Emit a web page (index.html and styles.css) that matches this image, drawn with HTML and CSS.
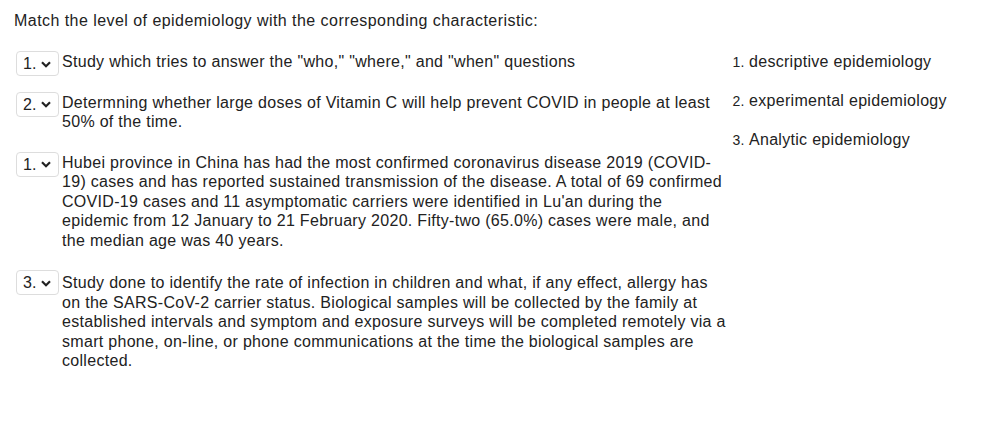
FILE: index.html
```html
<!DOCTYPE html>
<html lang="en">
  <head>
    <meta charset="UTF-8" />
    <title>Matching question</title>
    <link rel="stylesheet" href="styles.css">
  </head>
  <body>
    <div class="question">
      <p class="prompt">Match the level of epidemiology with the corresponding characteristic:</p>
      <div class="match">
        <div class="stems">
          <div class="stem">
            <span class="pick">1. <svg viewBox="0 0 10 7" class="chev"><path d="M1 1.2l4 4 4-4"/></svg></span>
            <p class="stem-text">Study which tries to answer the "who," "where," and "when" questions</p>
          </div>
          <div class="stem">
            <span class="pick">2. <svg viewBox="0 0 10 7" class="chev"><path d="M1 1.2l4 4 4-4"/></svg></span>
            <p class="stem-text">Determning whether large doses of Vitamin C will help prevent COVID in people at least 50% of the time.</p>
          </div>
          <div class="stem">
            <span class="pick">1. <svg viewBox="0 0 10 7" class="chev"><path d="M1 1.2l4 4 4-4"/></svg></span>
            <p class="stem-text">Hubei province in China has had the most confirmed coronavirus disease 2019 (COVID-19) cases and has reported sustained transmission of the disease. A total of 69 confirmed COVID-19 cases and 11 asymptomatic carriers were identified in Lu'an during the epidemic from 12 January to 21 February 2020. Fifty-two (65.0%) cases were male, and the median age was 40 years.</p>
          </div>
          <div class="stem">
            <span class="pick">3. <svg viewBox="0 0 10 7" class="chev"><path d="M1 1.2l4 4 4-4"/></svg></span>
            <p class="stem-text">Study done to identify the rate of infection in children and what, if any effect, allergy has on the SARS-CoV-2 carrier status. Biological samples will be collected by the family at established intervals and symptom and exposure surveys will be completed remotely via a smart phone, on-line, or phone communications at the time the biological samples are collected.</p>
          </div>
        </div>
        <ol class="answers">
          <li>descriptive epidemiology</li>
          <li>experimental epidemiology</li>
          <li>Analytic epidemiology</li>
        </ol>
      </div>
    </div>
  </body>
</html>
```

FILE: styles.css
```css
body {
  margin: 0;
  font-family: "Liberation Sans", Arial, sans-serif;
  font-size: 16px;
  letter-spacing: 0.3px;
  color: #222;
}

.question {
  padding: 11px 14px;
}

.prompt {
  margin: 0 0 20px;
  line-height: 20px;
  letter-spacing: 0.45px;
}

.match {
  display: flex;
  align-items: flex-start;
}

.stems {
  width: 716px;
  flex-shrink: 0;
}

.stem {
  display: flex;
  align-items: flex-start;
  margin-bottom: 15px;
}

.pick {
  flex-shrink: 0;
  display: inline-flex;
  align-items: center;
  gap: 5px;
  box-sizing: border-box;
  width: 43px;
  height: 25px;
  margin-left: 2px;
  padding: 1px 0 0 6px;
  border: 1px solid #ddd;
  border-radius: 4px;
  letter-spacing: 0;
  color: #222;
}

.chev {
  width: 10px;
  height: 7px;
  fill: none;
  stroke: #222;
  stroke-width: 2.2;
}

.stem-text {
  margin: 1px 0 0 3px;
  padding: 0 0 5px;
  line-height: 19.5px;
}

.stem:last-child .stem-text {
  margin-top: 3px;
}

.answers {
  margin: 0 0 0 3px;
  padding: 0 0 0 16px;
  line-height: 20px;
}

.answers li {
  margin: 1px 0 19px;
}

.answers li::marker {
  font-size: 14px;
}
```
